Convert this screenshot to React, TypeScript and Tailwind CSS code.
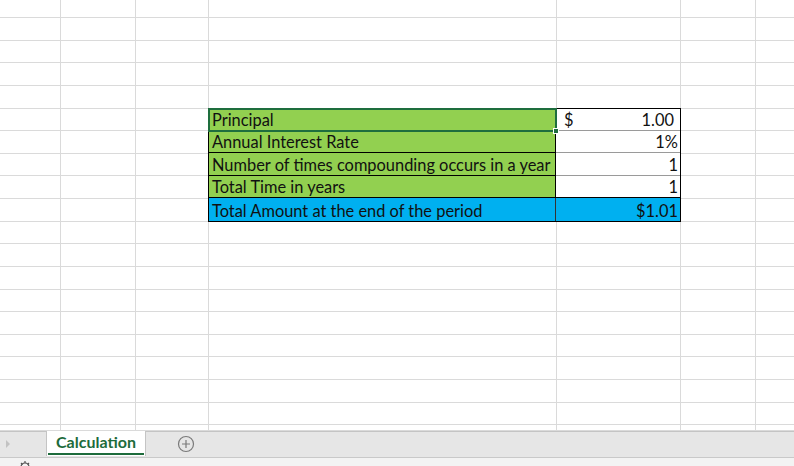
import React from 'react';

const cols = 7;
const rowCount = 20;

const rows = [
  { label: 'Principal', value: '1.00', currency: true },
  { label: 'Annual Interest Rate', value: '1%' },
  { label: 'Number of times compounding occurs in a year', value: '1' },
  { label: 'Total Time in years', value: '1' },
];

function Sheet() {
  const cells: React.ReactNode[] = [];
  for (let r = 0; r < rowCount; r++) {
    for (let c = 0; c < cols; c++) {
      if (r >= 5 && r <= 9 && (c === 3 || c === 4)) continue;
      cells.push(
        <div
          key={`${r}-${c}`}
          className={c === cols - 1 ? 'border-b border-[#dadada]' : 'border-b border-r border-[#dadada]'}
        />
      );
    }
  }

  return (
    <div className="grid grid-cols-[61px_75px_73px_348px_124px_75px_1fr] grid-rows-[18px_repeat(18,22.63px)_5.7px] bg-white">
      <div
        className="col-start-4 col-span-2 row-start-6 row-span-5 -ml-px -mt-px relative grid grid-rows-[repeat(5,minmax(0,1fr))] min-h-0 border border-black text-[16.4px] leading-[18px] whitespace-nowrap text-[#111]"
        style={{ fontFamily: 'Lato, "Noto Sans", sans-serif' }}
      >
        {rows.map((row, i) => (
          <div key={row.label} className={`flex min-h-0 ${i === 3 ? 'border-b border-black' : ''}`}>
            <div className={`w-[347px] flex items-end pb-[1px] pl-[3px] bg-[#92d050] border-r border-black ${i < 3 ? 'border-b border-[#5f7f3c]' : ''}`}>
              {row.label}
            </div>
            <div className={`flex-1 flex items-end pb-[1px] bg-white ${i < 3 ? 'border-b border-[#9a9a9a]' : ''}`}>
              {row.currency ? (
                <div className="flex w-full justify-between pl-[8px] pr-[6px]">
                  <span>$</span>
                  <span>{row.value}</span>
                </div>
              ) : (
                <div className="w-full text-right pr-[2px]">{row.value}</div>
              )}
            </div>
          </div>
        ))}
        <div className="flex min-h-0 bg-[#00b0f0]">
          <div className="w-[347px] flex items-end pb-[1px] pl-[3px] border-r border-[#333]">
            Total Amount at the end of the period
          </div>
          <div className="flex-1 flex items-end pb-[1px] justify-end pr-[2px]">$1.01</div>
        </div>
        {/* active cell outline */}
        <div className="absolute left-[-1px] top-[-1px] w-[349px] h-[24px] border-2 border-[#1e6e3e] pointer-events-none">
          <div className="absolute right-[-4px] bottom-[-4px] w-[6px] h-[6px] bg-[#1e6e3e] border border-white" />
        </div>
      </div>
      {cells}
    </div>
  );
}

function TabBar() {
  return (
    <div className="h-[26px] flex bg-[#e6e6e6] border-t border-[#c4c4c4]" style={{ fontFamily: 'Lato, "Noto Sans", sans-serif' }}>
      <div className="w-[46px] flex items-center pl-[5px]">
        <svg width="6" height="8" viewBox="0 0 6 8">
          <path d="M1 0 L5 4 L1 8 Z" fill="#c2c2c2" />
        </svg>
      </div>
      <div className="w-[100px] -mt-px h-[25px] bg-white border-l border-r border-[#c4c4c4] flex flex-col">
        <div className="flex-1 flex items-center justify-center text-[16px] leading-none font-bold text-[#1d6b3b]">Calculation</div>
        <div className="h-[2px] bg-[#1d6b3b] mx-[1px] mb-[1px]" />
      </div>
      <div className="w-[80px] flex items-center justify-center">
        <svg width="18" height="18" viewBox="0 0 18 18">
          <circle cx="9" cy="9" r="7.5" fill="none" stroke="#7a7a7a" strokeWidth="1.2" />
          <path d="M9 5 V13 M5 9 H13" stroke="#7a7a7a" strokeWidth="1.2" />
        </svg>
      </div>
      <div className="flex-1" />
    </div>
  );
}

function StatusBar() {
  return (
    <div className="h-[9px] bg-[#f3f3f3] border-t border-[#c9c9c9] overflow-hidden relative">
      <svg className="absolute left-[18px] top-[2px]" width="14" height="14" viewBox="0 0 14 14">
        <circle cx="7" cy="7" r="4" fill="none" stroke="#555" strokeWidth="1.2" />
        <path d="M7 1 V3 M3 3 L4.5 4.5 M11 3 L9.5 4.5" stroke="#555" strokeWidth="1.2" />
      </svg>
    </div>
  );
}

export default function App() {
  return (
    <div className="w-[794px] h-[466px] overflow-hidden bg-white flex flex-col">
      <Sheet />
      <TabBar />
      <StatusBar />
    </div>
  );
}
